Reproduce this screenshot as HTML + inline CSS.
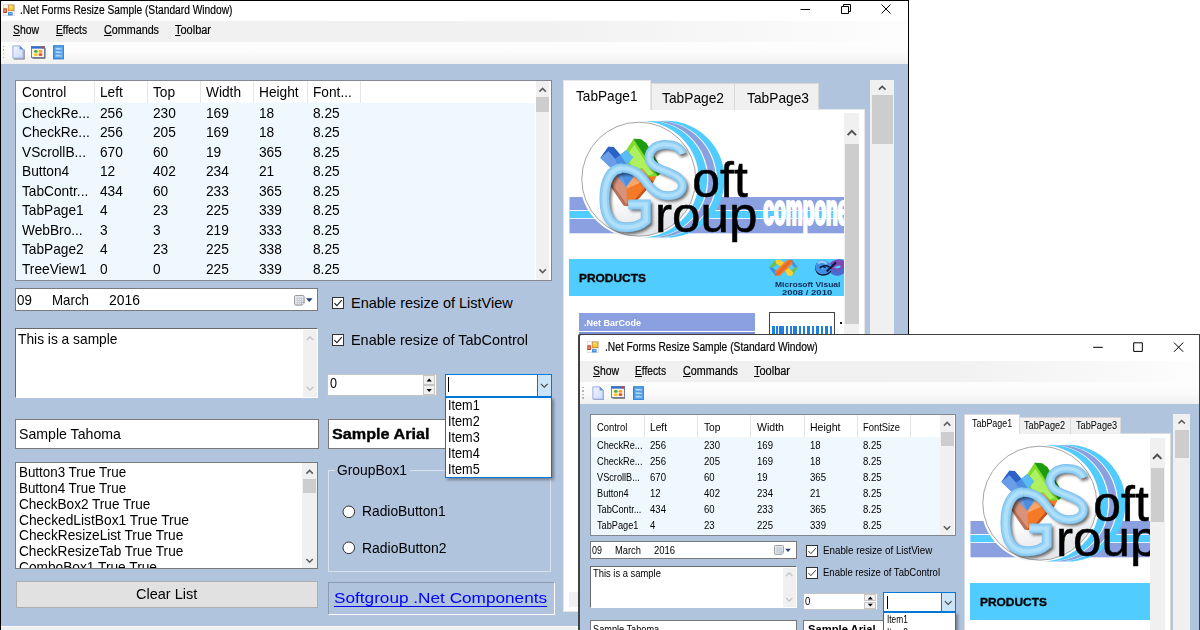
<!DOCTYPE html>
<html><head><meta charset="utf-8"><title>.Net Forms Resize Sample</title>
<style>
html,body{margin:0;padding:0}
html{width:1200px;height:630px;overflow:hidden}
body{width:1200px;height:630px;overflow:hidden;background:#fff;position:relative;font-family:"Liberation Sans",sans-serif;color:#000}
div,span,svg{position:absolute;box-sizing:border-box}
.t{white-space:nowrap;transform-origin:0 50%;display:block}
u{text-decoration:underline}

.win{background:#b0c4de;overflow:hidden}
.sunk{background:#fff;border:1px solid;border-color:#696969 #fff #fff #696969}
.flat{background:#fff;border:1px solid #7a7a7a}
.sb{background:#f0f0f0}
.th{background:#cdcdcd}

</style></head><body>
<div style="left:0;top:0;width:1200px;height:630px;overflow:hidden">
<div class="" style="left:0.00px;top:0.00px;width:909.20px;height:631.00px;background:#000"></div>
<div class="" style="left:1.00px;top:1.00px;width:907.20px;height:624.80px;background:#b0c4de"></div>
<div class="" style="left:1.00px;top:625.80px;width:907.20px;height:5.00px;background:linear-gradient(180deg,#fafafa 0,#fafafa 1.2px,#f0f0f0 1.2px)"></div>
<div class="" style="left:1.00px;top:1.00px;width:907.20px;height:19.50px;background:#fff"></div>
<div class="" style="left:1.00px;top:20.50px;width:907.20px;height:21.00px;background:linear-gradient(90deg,#f0f0f0 0%,#f1f1f1 60%,#fdfdfd 100%)"></div>
<div class="" style="left:1.00px;top:41.50px;width:907.20px;height:22.50px;background:linear-gradient(180deg,#fdfdfd 0%,#fbfbfb 50%,#f0f0f0 100%)"></div>
<svg style="left:3.0px;top:3.5px" width="12.0" height="12.0" viewBox="0 0 12 12"><rect x="0.3" y="0.3" width="11.4" height="11.4" fill="#f4f4f6" stroke="#d4d4da" stroke-width="0.6"/><rect x="1.2" y="1.4" width="2.4" height="1.6" fill="#fff"/><rect x="1.2" y="9.4" width="1" height="1.4" fill="#fff"/><rect x="2.8" y="9.4" width="1" height="1.4" fill="#fff"/><rect x="10" y="8.6" width="1" height="2.2" fill="#fff"/><rect x="4.9" y="0.6" width="6.4" height="6.5" fill="#cf8a3c"/><rect x="5.7" y="1.3" width="4.8" height="4.8" fill="#f5cb35"/><rect x="6.4" y="1.8" width="3" height="1.5" fill="#fae48a"/><rect x="0.3" y="4.3" width="3.6" height="4.6" rx="0.5" fill="#c8401f"/><rect x="1.4" y="5.4" width="1.3" height="2.2" fill="#f2c0b0"/><rect x="5" y="8.1" width="4.5" height="3.3" fill="#2b7fe0"/><rect x="5.7" y="8.8" width="3" height="1.4" fill="#8cc0f4"/></svg>
<span class="t " style="left:20.30px;top:1.74px;font-size:12.30px;line-height:17px;transform:scaleX(0.8312);-webkit-text-stroke:0.2px #000;">.Net Forms Resize Sample (Standard Window)</span>
<svg style="left:795px;top:0px" width="110" height="20" viewBox="0 0 110 20" fill="none" stroke="#000" stroke-width="1"><path d="M5.5 9.5H15"/><path d="M46.5 6.5H53.5V13.5H46.5Z M48.5 6.5V4.5H55.5V11.5H53.5" /><path d="M86.5 4.5L95.5 13.5M95.5 4.5L86.5 13.5"/></svg>
<span class="t " style="left:13.00px;top:22.24px;font-size:12.00px;line-height:17px;transform:scaleX(0.8662);-webkit-text-stroke:0.2px #000;"><u>S</u>how</span>
<span class="t " style="left:56.00px;top:22.24px;font-size:12.00px;line-height:17px;transform:scaleX(0.8502);-webkit-text-stroke:0.2px #000;"><u>E</u>ffects</span>
<span class="t " style="left:104.00px;top:22.24px;font-size:12.00px;line-height:17px;transform:scaleX(0.8964);-webkit-text-stroke:0.2px #000;"><u>C</u>ommands</span>
<span class="t " style="left:175.00px;top:22.24px;font-size:12.00px;line-height:17px;transform:scaleX(0.9147);-webkit-text-stroke:0.2px #000;"><u>T</u>oolbar</span>
<div class="" style="left:2.70px;top:45.80px;width:1.40px;height:1.40px;background:#b4b4b4"></div>
<div class="" style="left:2.70px;top:49.40px;width:1.40px;height:1.40px;background:#b4b4b4"></div>
<div class="" style="left:2.70px;top:53.00px;width:1.40px;height:1.40px;background:#b4b4b4"></div>
<div class="" style="left:2.70px;top:56.60px;width:1.40px;height:1.40px;background:#b4b4b4"></div>
<svg style="left:12.0px;top:45.0px" width="12.5" height="14.5" viewBox="0 0 13 15"><defs><linearGradient id="dg12" x1="0" y1="0" x2="1" y2="1"><stop offset="0" stop-color="#f2f6ff"/><stop offset="1" stop-color="#c9d9f8"/></linearGradient></defs><path d="M1.8 14.6H12.6V4.6" stroke="#5a5a5a" stroke-width="1.1" fill="none" opacity="0.85"/><path d="M0.9 0.9H8.2L11.6 4.3V13.6H0.9Z" fill="url(#dg12)" stroke="#8c9ee6" stroke-width="0.9"/><path d="M8.2 0.9V4.3H11.6Z" fill="#5f8fe6" stroke="#7c92e0" stroke-width="0.5"/></svg>
<svg style="left:31.0px;top:45.6px" width="14.5" height="13" viewBox="0 0 15 13.4"><path d="M1.5 12.8H14.6V2" stroke="#555" stroke-width="1" fill="none" opacity="0.8"/><rect x="0.5" y="0.5" width="13.4" height="11.4" fill="#fbf3dc" stroke="#5a6ea0" stroke-width="0.9"/><rect x="0.6" y="0.6" width="13.2" height="2.1" fill="#2f6fd0"/><rect x="11.2" y="0.4" width="1.8" height="2.2" fill="#e0402a"/><ellipse cx="5" cy="5.6" rx="2" ry="1.4" fill="#4fae3a"/><ellipse cx="9.8" cy="5.6" rx="2" ry="1.4" fill="#f0a428"/><ellipse cx="5" cy="8.9" rx="2" ry="1.4" fill="#f2c62c"/><ellipse cx="9.8" cy="8.9" rx="2" ry="1.4" fill="#e2502c"/></svg>
<svg style="left:53.0px;top:45.0px" width="11.4" height="14.6" viewBox="0 0 12 15"><rect x="0.7" y="0.7" width="10.6" height="13.6" fill="#5ea6ea" stroke="#3186da" stroke-width="1.4"/><rect x="2.3" y="2.8" width="7.4" height="2.4" rx="0.6" fill="#9fd0f8" stroke="#3c8ede" stroke-width="0.5"/><rect x="2.3" y="6.4" width="7.4" height="2.4" rx="0.6" fill="#9fd0f8" stroke="#3c8ede" stroke-width="0.5"/><rect x="2.3" y="10" width="7.4" height="2.4" rx="0.6" fill="#9fd0f8" stroke="#3c8ede" stroke-width="0.5"/><path d="M3 3.4H7M3 7H7M3 10.6H7" stroke="#e4f2fd" stroke-width="0.5"/></svg>
<div class="" style="left:15.00px;top:80.00px;width:537.00px;height:201.00px;background:#fff;border:1px solid #828790"></div>
<div class="" style="left:16.00px;top:103.00px;width:519.00px;height:177.00px;background:#f0f8ff"></div>
<div class="" style="left:93.75px;top:81.00px;width:1.00px;height:22.00px;background:#e5e5e5"></div>
<div class="" style="left:146.70px;top:81.00px;width:1.00px;height:22.00px;background:#e5e5e5"></div>
<div class="" style="left:199.60px;top:81.00px;width:1.00px;height:22.00px;background:#e5e5e5"></div>
<div class="" style="left:252.50px;top:81.00px;width:1.00px;height:22.00px;background:#e5e5e5"></div>
<div class="" style="left:307.00px;top:81.00px;width:1.00px;height:22.00px;background:#e5e5e5"></div>
<div class="" style="left:359.50px;top:81.00px;width:1.00px;height:22.00px;background:#e5e5e5"></div>
<span class="t " style="left:22.00px;top:82.28px;font-size:14.50px;line-height:20px;transform:scaleX(0.9450);">Control</span>
<span class="t " style="left:99.80px;top:82.28px;font-size:14.50px;line-height:20px;transform:scaleX(0.9450);">Left</span>
<span class="t " style="left:152.80px;top:82.28px;font-size:14.50px;line-height:20px;transform:scaleX(0.9450);">Top</span>
<span class="t " style="left:205.80px;top:82.28px;font-size:14.50px;line-height:20px;transform:scaleX(0.9450);">Width</span>
<span class="t " style="left:258.80px;top:82.28px;font-size:14.50px;line-height:20px;transform:scaleX(0.9450);">Height</span>
<span class="t " style="left:312.80px;top:82.28px;font-size:14.50px;line-height:20px;transform:scaleX(0.9450);">Font...</span>
<span class="t " style="left:22.00px;top:102.68px;font-size:14.50px;line-height:20px;transform:scaleX(0.9450);">CheckRe...</span>
<span class="t " style="left:99.80px;top:102.68px;font-size:14.50px;line-height:20px;transform:scaleX(0.9450);">256</span>
<span class="t " style="left:152.80px;top:102.68px;font-size:14.50px;line-height:20px;transform:scaleX(0.9450);">230</span>
<span class="t " style="left:205.80px;top:102.68px;font-size:14.50px;line-height:20px;transform:scaleX(0.9450);">169</span>
<span class="t " style="left:258.80px;top:102.68px;font-size:14.50px;line-height:20px;transform:scaleX(0.9450);">18</span>
<span class="t " style="left:312.80px;top:102.68px;font-size:14.50px;line-height:20px;transform:scaleX(0.9450);">8.25</span>
<span class="t " style="left:22.00px;top:122.18px;font-size:14.50px;line-height:20px;transform:scaleX(0.9450);">CheckRe...</span>
<span class="t " style="left:99.80px;top:122.18px;font-size:14.50px;line-height:20px;transform:scaleX(0.9450);">256</span>
<span class="t " style="left:152.80px;top:122.18px;font-size:14.50px;line-height:20px;transform:scaleX(0.9450);">205</span>
<span class="t " style="left:205.80px;top:122.18px;font-size:14.50px;line-height:20px;transform:scaleX(0.9450);">169</span>
<span class="t " style="left:258.80px;top:122.18px;font-size:14.50px;line-height:20px;transform:scaleX(0.9450);">18</span>
<span class="t " style="left:312.80px;top:122.18px;font-size:14.50px;line-height:20px;transform:scaleX(0.9450);">8.25</span>
<span class="t " style="left:22.00px;top:141.68px;font-size:14.50px;line-height:20px;transform:scaleX(0.9450);">VScrollB...</span>
<span class="t " style="left:99.80px;top:141.68px;font-size:14.50px;line-height:20px;transform:scaleX(0.9450);">670</span>
<span class="t " style="left:152.80px;top:141.68px;font-size:14.50px;line-height:20px;transform:scaleX(0.9450);">60</span>
<span class="t " style="left:205.80px;top:141.68px;font-size:14.50px;line-height:20px;transform:scaleX(0.9450);">19</span>
<span class="t " style="left:258.80px;top:141.68px;font-size:14.50px;line-height:20px;transform:scaleX(0.9450);">365</span>
<span class="t " style="left:312.80px;top:141.68px;font-size:14.50px;line-height:20px;transform:scaleX(0.9450);">8.25</span>
<span class="t " style="left:22.00px;top:161.18px;font-size:14.50px;line-height:20px;transform:scaleX(0.9450);">Button4</span>
<span class="t " style="left:99.80px;top:161.18px;font-size:14.50px;line-height:20px;transform:scaleX(0.9450);">12</span>
<span class="t " style="left:152.80px;top:161.18px;font-size:14.50px;line-height:20px;transform:scaleX(0.9450);">402</span>
<span class="t " style="left:205.80px;top:161.18px;font-size:14.50px;line-height:20px;transform:scaleX(0.9450);">234</span>
<span class="t " style="left:258.80px;top:161.18px;font-size:14.50px;line-height:20px;transform:scaleX(0.9450);">21</span>
<span class="t " style="left:312.80px;top:161.18px;font-size:14.50px;line-height:20px;transform:scaleX(0.9450);">8.25</span>
<span class="t " style="left:22.00px;top:180.68px;font-size:14.50px;line-height:20px;transform:scaleX(0.9450);">TabContr...</span>
<span class="t " style="left:99.80px;top:180.68px;font-size:14.50px;line-height:20px;transform:scaleX(0.9450);">434</span>
<span class="t " style="left:152.80px;top:180.68px;font-size:14.50px;line-height:20px;transform:scaleX(0.9450);">60</span>
<span class="t " style="left:205.80px;top:180.68px;font-size:14.50px;line-height:20px;transform:scaleX(0.9450);">233</span>
<span class="t " style="left:258.80px;top:180.68px;font-size:14.50px;line-height:20px;transform:scaleX(0.9450);">365</span>
<span class="t " style="left:312.80px;top:180.68px;font-size:14.50px;line-height:20px;transform:scaleX(0.9450);">8.25</span>
<span class="t " style="left:22.00px;top:200.18px;font-size:14.50px;line-height:20px;transform:scaleX(0.9450);">TabPage1</span>
<span class="t " style="left:99.80px;top:200.18px;font-size:14.50px;line-height:20px;transform:scaleX(0.9450);">4</span>
<span class="t " style="left:152.80px;top:200.18px;font-size:14.50px;line-height:20px;transform:scaleX(0.9450);">23</span>
<span class="t " style="left:205.80px;top:200.18px;font-size:14.50px;line-height:20px;transform:scaleX(0.9450);">225</span>
<span class="t " style="left:258.80px;top:200.18px;font-size:14.50px;line-height:20px;transform:scaleX(0.9450);">339</span>
<span class="t " style="left:312.80px;top:200.18px;font-size:14.50px;line-height:20px;transform:scaleX(0.9450);">8.25</span>
<span class="t " style="left:22.00px;top:219.68px;font-size:14.50px;line-height:20px;transform:scaleX(0.9450);">WebBro...</span>
<span class="t " style="left:99.80px;top:219.68px;font-size:14.50px;line-height:20px;transform:scaleX(0.9450);">3</span>
<span class="t " style="left:152.80px;top:219.68px;font-size:14.50px;line-height:20px;transform:scaleX(0.9450);">3</span>
<span class="t " style="left:205.80px;top:219.68px;font-size:14.50px;line-height:20px;transform:scaleX(0.9450);">219</span>
<span class="t " style="left:258.80px;top:219.68px;font-size:14.50px;line-height:20px;transform:scaleX(0.9450);">333</span>
<span class="t " style="left:312.80px;top:219.68px;font-size:14.50px;line-height:20px;transform:scaleX(0.9450);">8.25</span>
<span class="t " style="left:22.00px;top:239.18px;font-size:14.50px;line-height:20px;transform:scaleX(0.9450);">TabPage2</span>
<span class="t " style="left:99.80px;top:239.18px;font-size:14.50px;line-height:20px;transform:scaleX(0.9450);">4</span>
<span class="t " style="left:152.80px;top:239.18px;font-size:14.50px;line-height:20px;transform:scaleX(0.9450);">23</span>
<span class="t " style="left:205.80px;top:239.18px;font-size:14.50px;line-height:20px;transform:scaleX(0.9450);">225</span>
<span class="t " style="left:258.80px;top:239.18px;font-size:14.50px;line-height:20px;transform:scaleX(0.9450);">338</span>
<span class="t " style="left:312.80px;top:239.18px;font-size:14.50px;line-height:20px;transform:scaleX(0.9450);">8.25</span>
<span class="t " style="left:22.00px;top:258.68px;font-size:14.50px;line-height:20px;transform:scaleX(0.9450);">TreeView1</span>
<span class="t " style="left:99.80px;top:258.68px;font-size:14.50px;line-height:20px;transform:scaleX(0.9450);">0</span>
<span class="t " style="left:152.80px;top:258.68px;font-size:14.50px;line-height:20px;transform:scaleX(0.9450);">0</span>
<span class="t " style="left:205.80px;top:258.68px;font-size:14.50px;line-height:20px;transform:scaleX(0.9450);">225</span>
<span class="t " style="left:258.80px;top:258.68px;font-size:14.50px;line-height:20px;transform:scaleX(0.9450);">339</span>
<span class="t " style="left:312.80px;top:258.68px;font-size:14.50px;line-height:20px;transform:scaleX(0.9450);">8.25</span>
<div class="" style="left:536.00px;top:81.00px;width:13.20px;height:199.00px;background:#f0f0f0"></div>
<div class="" style="left:536.10px;top:97.00px;width:13.00px;height:14.60px;background:#cdcdcd"></div>
<svg style="left:0;top:0" width="1200" height="630"><path d="M539.40 91.60L542.60 88.40L545.80 91.60" fill="none" stroke="#606060" stroke-width="1.60"/></svg>
<svg style="left:0;top:0" width="1200" height="630"><path d="M539.40 269.40L542.60 272.60L545.80 269.40" fill="none" stroke="#606060" stroke-width="1.60"/></svg>
<div class="" style="left:15.00px;top:288.00px;width:303.00px;height:23.40px;background:#fff;border:1px solid #7a7a7a"></div>
<span class="t " style="left:17.10px;top:289.58px;font-size:14.50px;line-height:20px;transform:scaleX(0.9176);">09</span>
<span class="t " style="left:52.00px;top:289.58px;font-size:14.50px;line-height:20px;transform:scaleX(0.9184);">March</span>
<span class="t " style="left:109.00px;top:289.58px;font-size:14.50px;line-height:20px;transform:scaleX(0.9610);">2016</span>
<svg style="left:293.50px;top:294.50px" width="11.0" height="11.0" viewBox="0 0 11 11"><path d="M0.5 1.5Q0.5 0.5 1.5 0.5H9Q10 0.5 10 1.5V7.5L7.5 10H1.5Q0.5 10 0.5 9Z" fill="#e3e7ea" stroke="#8e9499" stroke-width="0.9"/><path d="M2 3.5H9M2 5.5H9M2 7.5H8M3.5 2V9M5.5 2V9M7.5 2V8.5" stroke="#b5c6d6" stroke-width="0.6"/><path d="M10 7.5H8.2Q7.5 7.5 7.5 8.2V10" fill="#f6f7f8" stroke="#8e9499" stroke-width="0.7"/><path d="M1.6 10.7H8L10.7 8V2" fill="none" stroke="#9b9b9b" stroke-width="0.7" opacity="0.7"/></svg>
<svg style="left:0;top:0" width="1200" height="630"><polygon points="306.00,298.30 312.60,298.30 309.30,301.90" fill="#1f3f7a"/></svg>
<svg style="left:332.00px;top:297.00px" width="12" height="12" viewBox="0 0 12 12"><rect x="0.5" y="0.5" width="11" height="11" fill="#fff" stroke="#333" stroke-width="1"/><path d="M2.4 6.1L4.9 8.6L9.8 3.2" fill="none" stroke="#222" stroke-width="1.10"/></svg>
<span class="t " style="left:351.00px;top:292.68px;font-size:14.50px;line-height:20px;">Enable resize of ListView</span>
<svg style="left:332.00px;top:334.00px" width="12" height="12" viewBox="0 0 12 12"><rect x="0.5" y="0.5" width="11" height="11" fill="#fff" stroke="#333" stroke-width="1"/><path d="M2.4 6.1L4.9 8.6L9.8 3.2" fill="none" stroke="#222" stroke-width="1.10"/></svg>
<span class="t " style="left:351.00px;top:329.58px;font-size:14.50px;line-height:20px;transform:scaleX(0.9951);">Enable resize of TabControl</span>
<div class="sunk" style="left:15.00px;top:328.00px;width:303.00px;height:70.00px;"></div>
<span class="t " style="left:18.00px;top:328.98px;font-size:14.50px;line-height:20px;transform:scaleX(0.9498);">This is a sample</span>
<div class="" style="left:303.00px;top:330.00px;width:14.00px;height:67.00px;background:#f0f0f0"></div>
<svg style="left:0;top:0" width="1200" height="630"><path d="M306.70 340.15L310.00 336.85L313.30 340.15" fill="none" stroke="#bfbfbf" stroke-width="1.30"/></svg>
<svg style="left:0;top:0" width="1200" height="630"><path d="M306.70 386.85L310.00 390.15L313.30 386.85" fill="none" stroke="#bfbfbf" stroke-width="1.30"/></svg>
<div class="" style="left:327.30px;top:373.60px;width:109.60px;height:22.80px;background:#fff;border:1px solid #c4c4c4"></div>
<span class="t " style="left:329.50px;top:373.18px;font-size:14.50px;line-height:20px;transform:scaleX(0.8680);">0</span>
<div class="" style="left:423.00px;top:375.20px;width:12.20px;height:9.80px;background:#f0f0f0;border:1px solid #c6c6c6"></div>
<div class="" style="left:423.00px;top:385.30px;width:12.20px;height:9.80px;background:#f0f0f0;border:1px solid #c6c6c6"></div>
<svg style="left:0;top:0" width="1200" height="630"><polygon points="426.60,381.60 429.20,378.60 431.80,381.60" fill="#000"/></svg>
<svg style="left:0;top:0" width="1200" height="630"><polygon points="426.60,389.00 431.80,389.00 429.20,392.00" fill="#000"/></svg>
<div class="" style="left:445.00px;top:373.60px;width:106.60px;height:23.00px;background:#fff;border:1px solid #0078d7"></div>
<div class="" style="left:537.30px;top:374.60px;width:13.30px;height:21.00px;background:#cce4f7;border-left:1px solid #0078d7"></div>
<svg style="left:0;top:0" width="1200" height="630"><path d="M540.90 383.80L544.30 387.20L547.70 383.80" fill="none" stroke="#444" stroke-width="1.10"/></svg>
<div class="" style="left:448.20px;top:377.00px;width:1.00px;height:15.00px;background:#000"></div>
<div class="" style="left:15.00px;top:419.00px;width:303.50px;height:29.50px;background:#fff;border:1px solid #7a7a7a"></div>
<span class="t " style="left:18.50px;top:423.78px;font-size:14.20px;line-height:20px;transform:scaleX(0.9965);">Sample Tahoma</span>
<div class="" style="left:328.00px;top:419.00px;width:223.60px;height:29.50px;background:#fff;border:1px solid #7a7a7a"></div>
<span class="t " style="left:331.80px;top:423.75px;font-size:14.00px;line-height:20px;font-weight:bold;transform:scaleX(1.1567);-webkit-text-stroke:0.35px #000;">Sample Arial</span>
<div class="" style="left:15.00px;top:462.00px;width:303.00px;height:107.00px;background:#fff;border:1px solid #7a7a7a;overflow:hidden"></div>
<span class="t " style="left:18.70px;top:461.88px;font-size:14.50px;line-height:20px;transform:scaleX(0.9227);">Button3 True True</span>
<span class="t " style="left:18.70px;top:477.78px;font-size:14.50px;line-height:20px;transform:scaleX(0.9227);">Button4 True True</span>
<span class="t " style="left:18.70px;top:493.68px;font-size:14.50px;line-height:20px;transform:scaleX(0.9370);">CheckBox2 True True</span>
<span class="t " style="left:18.70px;top:509.58px;font-size:14.50px;line-height:20px;transform:scaleX(0.9501);">CheckedListBox1 True True</span>
<span class="t " style="left:18.70px;top:525.48px;font-size:14.50px;line-height:20px;transform:scaleX(0.9439);">CheckResizeList True True</span>
<span class="t " style="left:18.70px;top:541.38px;font-size:14.50px;line-height:20px;transform:scaleX(0.9395);">CheckResizeTab True True</span>
<div style="left:16px;top:555px;width:280px;height:13px;overflow:hidden">
<span class="t " style="left:2.70px;top:2.28px;font-size:14.50px;line-height:20px;transform:scaleX(0.9460);">ComboBox1 True True</span>
</div>
<div class="" style="left:302.40px;top:463.00px;width:14.40px;height:105.00px;background:#f0f0f0"></div>
<div class="" style="left:302.90px;top:479.30px;width:13.40px;height:14.00px;background:#cdcdcd"></div>
<svg style="left:0;top:0" width="1200" height="630"><path d="M306.40 473.60L309.60 470.40L312.80 473.60" fill="none" stroke="#606060" stroke-width="1.60"/></svg>
<svg style="left:0;top:0" width="1200" height="630"><path d="M306.40 559.00L309.60 562.20L312.80 559.00" fill="none" stroke="#606060" stroke-width="1.60"/></svg>
<div class="" style="left:16.00px;top:580.50px;width:302.00px;height:27.50px;background:#e1e1e1;border:1px solid #adadad"></div>
<span class="t " style="left:135.70px;top:583.98px;font-size:14.50px;line-height:20px;transform:scaleX(1.0009);">Clear List</span>
<div class="" style="left:328.00px;top:469.90px;width:222.60px;height:102.10px;border:1px solid #dce2eb"></div>
<div class="" style="left:334.50px;top:466.00px;width:75.50px;height:10.00px;background:#b0c4de"></div>
<span class="t " style="left:337.30px;top:460.15px;font-size:14.00px;line-height:20px;transform:scaleX(0.9884);">GroupBox1</span>
<svg style="left:342.20px;top:504.70px" width="13.6" height="13.6"><circle cx="6.80" cy="6.80" r="5.80" fill="#fff" stroke="#333" stroke-width="1"/></svg>
<span class="t " style="left:361.60px;top:501.92px;font-size:13.80px;line-height:19px;transform:scaleX(1.0008);">RadioButton1</span>
<svg style="left:342.20px;top:541.20px" width="13.6" height="13.6"><circle cx="6.80" cy="6.80" r="5.80" fill="#fff" stroke="#333" stroke-width="1"/></svg>
<span class="t " style="left:361.60px;top:538.52px;font-size:13.80px;line-height:19px;transform:scaleX(1.0104);">RadioButton2</span>
<div class="" style="left:327.50px;top:582.30px;width:227.00px;height:32.50px;border:1px solid;border-color:#8c9cb4 #fff #fff #8c9cb4"></div>
<span class="t " style="left:333.70px;top:587.23px;font-size:15.20px;line-height:21px;color:#0000ff;transform:scaleX(1.1320);text-decoration:underline;text-underline-offset:2.5px;text-decoration-thickness:1px;">Softgroup .Net Components</span>
<div class="" style="left:447.00px;top:399.00px;width:107.00px;height:81.00px;background:rgba(0,0,0,0.35);filter:blur(1.5px)"></div>
<div class="" style="left:445.00px;top:396.60px;width:106.60px;height:81.00px;background:#fff;border:1px solid #0078d7"></div>
<span class="t " style="left:448.00px;top:394.98px;font-size:14.50px;line-height:20px;transform:scaleX(0.8741);">Item1</span>
<span class="t " style="left:448.00px;top:410.88px;font-size:14.50px;line-height:20px;transform:scaleX(0.8741);">Item2</span>
<span class="t " style="left:448.00px;top:426.78px;font-size:14.50px;line-height:20px;transform:scaleX(0.8741);">Item3</span>
<span class="t " style="left:448.00px;top:442.68px;font-size:14.50px;line-height:20px;transform:scaleX(0.8741);">Item4</span>
<span class="t " style="left:448.00px;top:458.58px;font-size:14.50px;line-height:20px;transform:scaleX(0.8741);">Item5</span>
<div class="" style="left:563.30px;top:109.30px;width:302.00px;height:503.00px;background:#fff;border:1px solid #e6e6e6"></div>
<div class="" style="left:651.00px;top:82.60px;width:83.80px;height:27.20px;background:#f0f0f0;border:1px solid #d9d9d9;border-bottom:none"></div>
<div class="" style="left:733.80px;top:82.60px;width:84.80px;height:27.20px;background:#f0f0f0;border:1px solid #d9d9d9;border-bottom:none"></div>
<div class="" style="left:563.30px;top:80.40px;width:88.20px;height:30.00px;background:#fff;border:1px solid #e6e6e6;border-bottom:none"></div>
<span class="t " style="left:576.00px;top:85.68px;font-size:14.50px;line-height:20px;transform:scaleX(0.9417);">TabPage1</span>
<span class="t " style="left:661.50px;top:87.68px;font-size:14.50px;line-height:20px;transform:scaleX(0.9494);">TabPage2</span>
<span class="t " style="left:747.00px;top:87.68px;font-size:14.50px;line-height:20px;transform:scaleX(0.9494);">TabPage3</span>
<div style="left:566.50px;top:112.50px;width:277.80px;height:496.50px;overflow:hidden;background:#fff">
<div style="left:-566.50px;top:-112.50px;width:1200px;height:630px">
<svg style="left:0;top:0;overflow:visible" width="1200" height="630"><defs><filter id="bla" x="-20%" y="-20%" width="140%" height="140%"><feGaussianBlur stdDeviation="6"/></filter><filter id="bsa" x="-20%" y="-20%" width="140%" height="140%"><feGaussianBlur stdDeviation="3"/></filter><linearGradient id="cga" x1="0" y1="0" x2="0.3" y2="1"><stop offset="0" stop-color="#fff"/><stop offset="0.7" stop-color="#fff"/><stop offset="1" stop-color="#e4e6ea"/></linearGradient></defs><rect x="569.5" y="197" width="500" height="36.3" fill="#8ba0e0"/><rect x="569.5" y="210.1" width="500" height="8.8" fill="#fff"/><rect x="569.5" y="211" width="500" height="7.1" fill="#50ccff"/><circle cx="666.2" cy="179.2" r="58.4" fill="#50ccff"/><circle cx="658.6" cy="179.2" r="58.3" fill="#fff"/><circle cx="657.5" cy="179.2" r="58.3" fill="#8ba0e0"/><circle cx="650.0" cy="179.2" r="58.3" fill="#fff"/><circle cx="648.8" cy="179.2" r="58.3" fill="#50ccff"/><circle cx="640.6" cy="179.2" r="58.2" fill="#fff"/><path d="M638.8 119.9A59.3 59.3 0 0 0 638.8 238.5Z" fill="#fff"/><circle cx="638.8" cy="179.2" r="57" fill="url(#cga)" stroke="#9a9a9a" stroke-width="0.9"/><g transform="translate(595,130) scale(0.133333)"><polygon points="105,405 160,335 240,425 240,572 215,566" fill="#d8927a"/><polygon points="105,405 215,566 240,572 240,560 120,395" fill="#b87058"/><polygon points="290,350 355,290 400,345 465,340 440,388 300,545 238,572 238,425" fill="#f47a28"/><polygon points="290,350 355,292 400,345 330,400 238,440 238,425" fill="#f9a468"/><polygon points="440,388 300,545 238,572 238,556 290,530 425,375" fill="#c85418"/><polygon points="235,150 290,65 345,70 385,100 512,310 470,345 400,350 355,290 290,350 240,260" fill="#7edc2c"/><polygon points="290,65 345,70 385,100 512,310 470,345 300,85" fill="#1c9c10"/><polygon points="255,165 295,110 440,330 400,340 355,285 300,300 262,250" fill="#b6f56a" opacity="0.85"/><polygon points="40,210 100,125 140,128 190,185 235,150 285,205 240,260 290,350 235,428 160,340 130,295" fill="#4c8fe2"/><polygon points="40,210 100,125 140,128 190,185 150,215 100,160" fill="#2c62c8"/><polygon points="40,210 100,160 150,215 235,428 160,340 130,295" fill="#6f9fe8" opacity="0.9"/><polygon points="190,185 235,150 285,205 240,260" fill="#58bcf6"/></g><g transform="translate(564,110) scale(0.22222)" fill="none" stroke-linecap="butt" stroke-linejoin="miter"><g filter="url(#bla)" stroke="#000" stroke-opacity="0.55" transform="translate(11,11)"><path d="M532,197C522,163 490,155 455,155C413,155 383,180 383,212C383,250 425,262 458,275C500,292 533,307 533,340C533,372 500,386 465,386C425,386 400,366 375,333C350,297 320,262 262,262" stroke-width="34"/><path d="M290,425L368,425L368,498C350,515 320,528 280,528C215,528 182,480 182,400C182,320 210,262 262,262" stroke-width="40"/></g><path d="M290,425L368,425L368,498C350,515 320,528 280,528C215,528 182,480 182,400C182,320 210,262 262,262" stroke="#7fc1ec" stroke-width="45"/><path d="M532,197C522,163 490,155 455,155C413,155 383,180 383,212C383,250 425,262 458,275C500,292 533,307 533,340C533,372 500,386 465,386C425,386 400,366 375,333C350,297 320,262 262,262" stroke="#7fc1ec" stroke-width="40"/><path d="M290,425L368,425L368,498C350,515 320,528 280,528C215,528 182,480 182,400C182,320 210,262 262,262" stroke="#93d0f6" stroke-width="37"/><path d="M532,197C522,163 490,155 455,155C413,155 383,180 383,212C383,250 425,262 458,275C500,292 533,307 533,340C533,372 500,386 465,386C425,386 400,366 375,333C350,297 320,262 262,262" stroke="#93d0f6" stroke-width="32"/><path d="M290,425L368,425L368,498C350,515 320,528 280,528C215,528 182,480 182,400C182,320 210,262 262,262" stroke="#b0dffa" stroke-width="19" filter="url(#bsa)"/><path d="M532,197C522,163 490,155 455,155C413,155 383,180 383,212C383,250 425,262 458,275C500,292 533,307 533,340C533,372 500,386 465,386C425,386 400,366 375,333C350,297 320,262 262,262" stroke="#b0dffa" stroke-width="16" filter="url(#bsa)"/></g><text x="692.3" y="196.8" font-size="50" textLength="55.5" lengthAdjust="spacingAndGlyphs" fill="#000" stroke="#000" stroke-width="0.5">oft</text><text x="655" y="232.3" font-size="49.5" textLength="102.5" lengthAdjust="spacingAndGlyphs" fill="#000" stroke="#000" stroke-width="0.5">roup</text><text x="762.75" y="225.4" font-size="43.8" font-weight="bold" textLength="114" lengthAdjust="spacingAndGlyphs" fill="#fff" stroke="#fff" stroke-width="1.5">components</text><text x="763.65" y="225.4" font-size="43.8" font-weight="bold" textLength="114" lengthAdjust="spacingAndGlyphs" fill="#fff" stroke="#fff" stroke-width="1.5">components</text></svg>
<div class="" style="left:569.20px;top:259.00px;width:500.00px;height:37.00px;background:#50ccff"></div>
<span class="t " style="left:578.50px;top:270.89px;font-size:11.00px;line-height:15px;font-weight:bold;transform:scaleX(1.0855);-webkit-text-stroke:0.3px #000;">PRODUCTS</span>
<svg style="left:760px;top:252px;overflow:visible" width="100" height="50"><g transform="scale(0.083333)"><polygon points="108,185 185,92 200,100 200,150 155,185" fill="#6cc04a"/><polygon points="108,185 155,185 200,232 200,275 185,285" fill="#3f8fe0"/><polygon points="385,92 455,185 412,185 372,140 372,100" fill="#4a90e0"/><polygon points="455,185 385,285 372,275 372,232 412,185" fill="#6cc04a"/><polygon points="185,95 245,92 310,150 270,190 190,135" fill="#fbd034"/><polygon points="300,220 340,190 400,245 385,285 330,285" fill="#fbcf30"/><polygon points="180,235 325,95 385,92 388,140 240,285 185,285" fill="#f4802a"/><polygon points="180,260 355,95 385,92 388,115 215,285 185,285" fill="#e4602a" opacity="0.7"/><g transform="translate(838,186) scale(1.06,1.22) translate(-835,-190)"><path d="M835,190C880,135 975,120 990,172C995,240 890,250 835,190" fill="none" stroke="#7c4cb4" stroke-width="62"/><path d="M835,200C795,140 715,128 698,178C690,240 780,250 835,200" fill="none" stroke="#0c1838" stroke-width="58" transform="translate(0,10)"/><path d="M835,192C795,140 715,128 698,178C690,236 780,248 835,192" fill="none" stroke="#3f8fe4" stroke-width="56"/><path d="M700,150C725,125 775,128 800,155" fill="none" stroke="#8fccf8" stroke-width="24"/><path d="M720,195C760,165 800,170 830,185" fill="none" stroke="#0c1838" stroke-width="16"/><path d="M800,228L905,140" fill="none" stroke="#0c1838" stroke-width="22"/><path d="M860,222C900,262 990,250 995,195" fill="none" stroke="#4a6ad0" stroke-width="50"/></g></g></svg>
<span class="t " style="left:774.60px;top:278.93px;font-size:8.00px;line-height:11px;font-weight:bold;color:#0e2a52;transform:scaleX(1.0609);">Microsoft Visual</span>
<span class="t " style="left:782.30px;top:287.33px;font-size:8.00px;line-height:11px;font-weight:bold;color:#0e2a52;transform:scaleX(1.1878);">2008 / 2010</span>
<div class="" style="left:579.00px;top:313.30px;width:175.60px;height:17.80px;background:#8ba0e0"></div>
<span class="t " style="left:584.00px;top:315.77px;font-size:9.60px;line-height:13px;font-weight:bold;color:#fff;transform:scaleX(0.9373);">.Net BarCode</span>
<div class="" style="left:579.00px;top:332.40px;width:175.60px;height:10.00px;background:#7b90d2"></div>
<div class="" style="left:769.00px;top:312.00px;width:66.00px;height:40.00px;background:#fff;border:1px solid #444"></div>
<div class="" style="left:772.00px;top:326.00px;width:3.00px;height:10.00px;background:#1e7fe0"></div>
<div class="" style="left:776.00px;top:326.00px;width:2.00px;height:10.00px;background:#1e7fe0"></div>
<div class="" style="left:779.00px;top:326.00px;width:5.00px;height:10.00px;background:#1e7fe0"></div>
<div class="" style="left:786.00px;top:326.00px;width:2.00px;height:10.00px;background:#1e7fe0"></div>
<div class="" style="left:790.00px;top:326.00px;width:2.00px;height:10.00px;background:#1e7fe0"></div>
<div class="" style="left:793.00px;top:326.00px;width:4.00px;height:10.00px;background:#1e7fe0"></div>
<div class="" style="left:799.00px;top:326.00px;width:2.00px;height:10.00px;background:#1e7fe0"></div>
<div class="" style="left:803.00px;top:326.00px;width:2.00px;height:10.00px;background:#1e7fe0"></div>
<div class="" style="left:807.00px;top:326.00px;width:3.00px;height:10.00px;background:#1e7fe0"></div>
<div class="" style="left:812.00px;top:326.00px;width:2.00px;height:10.00px;background:#1e7fe0"></div>
<div class="" style="left:816.00px;top:326.00px;width:3.00px;height:10.00px;background:#1e7fe0"></div>
<div class="" style="left:821.00px;top:326.00px;width:2.00px;height:10.00px;background:#1e7fe0"></div>
<div class="" style="left:825.00px;top:326.00px;width:3.00px;height:10.00px;background:#1e7fe0"></div>
<div class="" style="left:830.00px;top:326.00px;width:2.00px;height:10.00px;background:#1e7fe0"></div>
<div class="" style="left:839.50px;top:321.50px;width:2.00px;height:2.00px;background:#111"></div>
</div></div>
<div class="" style="left:844.30px;top:113.00px;width:14.80px;height:496.00px;background:#f0f0f0"></div>
<div class="" style="left:845.20px;top:144.00px;width:13.40px;height:179.70px;background:#cdcdcd"></div>
<svg style="left:0;top:0" width="1200" height="630"><path d="M847.60 135.10L851.80 130.90L856.00 135.10" fill="none" stroke="#505050" stroke-width="2.00"/></svg>
<div class="" style="left:569.00px;top:592.00px;width:288.00px;height:15.00px;background:#f0f0f0"></div>
<div class="" style="left:870.40px;top:80.00px;width:23.60px;height:530.00px;background:#f0f0f0"></div>
<div class="" style="left:871.50px;top:95.00px;width:21.60px;height:49.00px;background:#cdcdcd"></div>
<svg style="left:0;top:0" width="1200" height="630"><path d="M878.90 89.65L882.20 86.35L885.50 89.65" fill="none" stroke="#505050" stroke-width="1.50"/></svg>
<div class="" style="left:578.40px;top:333.50px;width:621.60px;height:296.50px;background:#404040;border-top-left-radius:2px"></div>
<div class="" style="left:579.60px;top:334.50px;width:619.60px;height:296.50px;background:#b0c4de;border-top-left-radius:1.5px"></div>
<div class="" style="left:579.60px;top:334.50px;width:619.60px;height:26.50px;background:#fff;border-top-left-radius:1.5px"></div>
<div class="" style="left:579.60px;top:361.00px;width:619.60px;height:21.00px;background:linear-gradient(90deg,#f0f0f0 0%,#f1f1f1 60%,#fdfdfd 100%)"></div>
<div class="" style="left:579.60px;top:382.00px;width:619.60px;height:22.20px;background:linear-gradient(180deg,#fdfdfd 0%,#fbfbfb 50%,#f0f0f0 100%)"></div>
<svg style="left:587.0px;top:341.0px" width="12.0" height="12.0" viewBox="0 0 12 12"><rect x="0.3" y="0.3" width="11.4" height="11.4" fill="#f4f4f6" stroke="#d4d4da" stroke-width="0.6"/><rect x="1.2" y="1.4" width="2.4" height="1.6" fill="#fff"/><rect x="1.2" y="9.4" width="1" height="1.4" fill="#fff"/><rect x="2.8" y="9.4" width="1" height="1.4" fill="#fff"/><rect x="10" y="8.6" width="1" height="2.2" fill="#fff"/><rect x="4.9" y="0.6" width="6.4" height="6.5" fill="#cf8a3c"/><rect x="5.7" y="1.3" width="4.8" height="4.8" fill="#f5cb35"/><rect x="6.4" y="1.8" width="3" height="1.5" fill="#fae48a"/><rect x="0.3" y="4.3" width="3.6" height="4.6" rx="0.5" fill="#c8401f"/><rect x="1.4" y="5.4" width="1.3" height="2.2" fill="#f2c0b0"/><rect x="5" y="8.1" width="4.5" height="3.3" fill="#2b7fe0"/><rect x="5.7" y="8.8" width="3" height="1.4" fill="#8cc0f4"/></svg>
<span class="t " style="left:604.80px;top:338.54px;font-size:12.30px;line-height:17px;transform:scaleX(0.8324);-webkit-text-stroke:0.2px #000;">.Net Forms Resize Sample (Standard Window)</span>
<svg style="left:1085px;top:334px" width="110" height="26" viewBox="0 0 110 26" fill="none" stroke="#000" stroke-width="1"><path d="M8.2 13.3H17.8"/><path d="M48.7 8.8H57.3V17.4H48.7Z"/><path d="M89 8.6L98.2 17.8M98.2 8.6L89 17.8"/></svg>
<span class="t " style="left:592.50px;top:362.64px;font-size:12.00px;line-height:17px;transform:scaleX(0.8662);-webkit-text-stroke:0.2px #000;"><u>S</u>how</span>
<span class="t " style="left:635.00px;top:362.64px;font-size:12.00px;line-height:17px;transform:scaleX(0.8502);-webkit-text-stroke:0.2px #000;"><u>E</u>ffects</span>
<span class="t " style="left:683.00px;top:362.64px;font-size:12.00px;line-height:17px;transform:scaleX(0.8964);-webkit-text-stroke:0.2px #000;"><u>C</u>ommands</span>
<span class="t " style="left:754.00px;top:362.64px;font-size:12.00px;line-height:17px;transform:scaleX(0.9147);-webkit-text-stroke:0.2px #000;"><u>T</u>oolbar</span>
<div class="" style="left:582.20px;top:386.60px;width:1.40px;height:1.40px;background:#b4b4b4"></div>
<div class="" style="left:582.20px;top:390.20px;width:1.40px;height:1.40px;background:#b4b4b4"></div>
<div class="" style="left:582.20px;top:393.80px;width:1.40px;height:1.40px;background:#b4b4b4"></div>
<div class="" style="left:582.20px;top:397.40px;width:1.40px;height:1.40px;background:#b4b4b4"></div>
<svg style="left:591.5px;top:385.8px" width="12.5" height="14.5" viewBox="0 0 13 15"><defs><linearGradient id="dg591" x1="0" y1="0" x2="1" y2="1"><stop offset="0" stop-color="#f2f6ff"/><stop offset="1" stop-color="#c9d9f8"/></linearGradient></defs><path d="M1.8 14.6H12.6V4.6" stroke="#5a5a5a" stroke-width="1.1" fill="none" opacity="0.85"/><path d="M0.9 0.9H8.2L11.6 4.3V13.6H0.9Z" fill="url(#dg591)" stroke="#8c9ee6" stroke-width="0.9"/><path d="M8.2 0.9V4.3H11.6Z" fill="#5f8fe6" stroke="#7c92e0" stroke-width="0.5"/></svg>
<svg style="left:610.5px;top:386.4px" width="14.5" height="13" viewBox="0 0 15 13.4"><path d="M1.5 12.8H14.6V2" stroke="#555" stroke-width="1" fill="none" opacity="0.8"/><rect x="0.5" y="0.5" width="13.4" height="11.4" fill="#fbf3dc" stroke="#5a6ea0" stroke-width="0.9"/><rect x="0.6" y="0.6" width="13.2" height="2.1" fill="#2f6fd0"/><rect x="11.2" y="0.4" width="1.8" height="2.2" fill="#e0402a"/><ellipse cx="5" cy="5.6" rx="2" ry="1.4" fill="#4fae3a"/><ellipse cx="9.8" cy="5.6" rx="2" ry="1.4" fill="#f0a428"/><ellipse cx="5" cy="8.9" rx="2" ry="1.4" fill="#f2c62c"/><ellipse cx="9.8" cy="8.9" rx="2" ry="1.4" fill="#e2502c"/></svg>
<svg style="left:632.5px;top:385.8px" width="11.4" height="14.6" viewBox="0 0 12 15"><rect x="0.7" y="0.7" width="10.6" height="13.6" fill="#5ea6ea" stroke="#3186da" stroke-width="1.4"/><rect x="2.3" y="2.8" width="7.4" height="2.4" rx="0.6" fill="#9fd0f8" stroke="#3c8ede" stroke-width="0.5"/><rect x="2.3" y="6.4" width="7.4" height="2.4" rx="0.6" fill="#9fd0f8" stroke="#3c8ede" stroke-width="0.5"/><rect x="2.3" y="10" width="7.4" height="2.4" rx="0.6" fill="#9fd0f8" stroke="#3c8ede" stroke-width="0.5"/><path d="M3 3.4H7M3 7H7M3 10.6H7" stroke="#e4f2fd" stroke-width="0.5"/></svg>
<div class="" style="left:590.00px;top:414.00px;width:366.30px;height:122.00px;background:#fff;border:1px solid #828790;overflow:hidden"></div>
<div class="" style="left:591.00px;top:437.30px;width:349.00px;height:97.70px;background:#f0f8ff"></div>
<div class="" style="left:643.80px;top:415.00px;width:1.00px;height:22.30px;background:#e5e5e5"></div>
<div class="" style="left:697.00px;top:415.00px;width:1.00px;height:22.30px;background:#e5e5e5"></div>
<div class="" style="left:750.20px;top:415.00px;width:1.00px;height:22.30px;background:#e5e5e5"></div>
<div class="" style="left:803.50px;top:415.00px;width:1.00px;height:22.30px;background:#e5e5e5"></div>
<div class="" style="left:856.80px;top:415.00px;width:1.00px;height:22.30px;background:#e5e5e5"></div>
<div class="" style="left:910.10px;top:415.00px;width:1.00px;height:22.30px;background:#e5e5e5"></div>
<span class="t " style="left:597.00px;top:419.69px;font-size:11.00px;line-height:15px;transform:scaleX(0.8545);">Control</span>
<span class="t " style="left:650.00px;top:419.69px;font-size:11.00px;line-height:15px;transform:scaleX(0.9265);">Left</span>
<span class="t " style="left:703.50px;top:419.69px;font-size:11.00px;line-height:15px;transform:scaleX(0.9303);">Top</span>
<span class="t " style="left:756.50px;top:419.69px;font-size:11.00px;line-height:15px;transform:scaleX(0.9602);">Width</span>
<span class="t " style="left:810.00px;top:419.69px;font-size:11.00px;line-height:15px;transform:scaleX(0.9592);">Height</span>
<span class="t " style="left:863.00px;top:419.69px;font-size:11.00px;line-height:15px;transform:scaleX(0.8523);">FontSize</span>
<span class="t " style="left:597.00px;top:437.99px;font-size:11.00px;line-height:15px;transform:scaleX(0.8350);">CheckRe...</span>
<span class="t " style="left:650.00px;top:437.99px;font-size:11.00px;line-height:15px;transform:scaleX(0.8700);">256</span>
<span class="t " style="left:703.50px;top:437.99px;font-size:11.00px;line-height:15px;transform:scaleX(0.8700);">230</span>
<span class="t " style="left:756.50px;top:437.99px;font-size:11.00px;line-height:15px;transform:scaleX(0.8700);">169</span>
<span class="t " style="left:810.00px;top:437.99px;font-size:11.00px;line-height:15px;transform:scaleX(0.8700);">18</span>
<span class="t " style="left:863.00px;top:437.99px;font-size:11.00px;line-height:15px;transform:scaleX(0.8700);">8.25</span>
<span class="t " style="left:597.00px;top:453.99px;font-size:11.00px;line-height:15px;transform:scaleX(0.8350);">CheckRe...</span>
<span class="t " style="left:650.00px;top:453.99px;font-size:11.00px;line-height:15px;transform:scaleX(0.8700);">256</span>
<span class="t " style="left:703.50px;top:453.99px;font-size:11.00px;line-height:15px;transform:scaleX(0.8700);">205</span>
<span class="t " style="left:756.50px;top:453.99px;font-size:11.00px;line-height:15px;transform:scaleX(0.8700);">169</span>
<span class="t " style="left:810.00px;top:453.99px;font-size:11.00px;line-height:15px;transform:scaleX(0.8700);">18</span>
<span class="t " style="left:863.00px;top:453.99px;font-size:11.00px;line-height:15px;transform:scaleX(0.8700);">8.25</span>
<span class="t " style="left:597.00px;top:469.99px;font-size:11.00px;line-height:15px;transform:scaleX(0.8350);">VScrollB...</span>
<span class="t " style="left:650.00px;top:469.99px;font-size:11.00px;line-height:15px;transform:scaleX(0.8700);">670</span>
<span class="t " style="left:703.50px;top:469.99px;font-size:11.00px;line-height:15px;transform:scaleX(0.8700);">60</span>
<span class="t " style="left:756.50px;top:469.99px;font-size:11.00px;line-height:15px;transform:scaleX(0.8700);">19</span>
<span class="t " style="left:810.00px;top:469.99px;font-size:11.00px;line-height:15px;transform:scaleX(0.8700);">365</span>
<span class="t " style="left:863.00px;top:469.99px;font-size:11.00px;line-height:15px;transform:scaleX(0.8700);">8.25</span>
<span class="t " style="left:597.00px;top:485.99px;font-size:11.00px;line-height:15px;transform:scaleX(0.8350);">Button4</span>
<span class="t " style="left:650.00px;top:485.99px;font-size:11.00px;line-height:15px;transform:scaleX(0.8700);">12</span>
<span class="t " style="left:703.50px;top:485.99px;font-size:11.00px;line-height:15px;transform:scaleX(0.8700);">402</span>
<span class="t " style="left:756.50px;top:485.99px;font-size:11.00px;line-height:15px;transform:scaleX(0.8700);">234</span>
<span class="t " style="left:810.00px;top:485.99px;font-size:11.00px;line-height:15px;transform:scaleX(0.8700);">21</span>
<span class="t " style="left:863.00px;top:485.99px;font-size:11.00px;line-height:15px;transform:scaleX(0.8700);">8.25</span>
<span class="t " style="left:597.00px;top:501.99px;font-size:11.00px;line-height:15px;transform:scaleX(0.8350);">TabContr...</span>
<span class="t " style="left:650.00px;top:501.99px;font-size:11.00px;line-height:15px;transform:scaleX(0.8700);">434</span>
<span class="t " style="left:703.50px;top:501.99px;font-size:11.00px;line-height:15px;transform:scaleX(0.8700);">60</span>
<span class="t " style="left:756.50px;top:501.99px;font-size:11.00px;line-height:15px;transform:scaleX(0.8700);">233</span>
<span class="t " style="left:810.00px;top:501.99px;font-size:11.00px;line-height:15px;transform:scaleX(0.8700);">365</span>
<span class="t " style="left:863.00px;top:501.99px;font-size:11.00px;line-height:15px;transform:scaleX(0.8700);">8.25</span>
<span class="t " style="left:597.00px;top:517.99px;font-size:11.00px;line-height:15px;transform:scaleX(0.8350);">TabPage1</span>
<span class="t " style="left:650.00px;top:517.99px;font-size:11.00px;line-height:15px;transform:scaleX(0.8700);">4</span>
<span class="t " style="left:703.50px;top:517.99px;font-size:11.00px;line-height:15px;transform:scaleX(0.8700);">23</span>
<span class="t " style="left:756.50px;top:517.99px;font-size:11.00px;line-height:15px;transform:scaleX(0.8700);">225</span>
<span class="t " style="left:810.00px;top:517.99px;font-size:11.00px;line-height:15px;transform:scaleX(0.8700);">339</span>
<span class="t " style="left:863.00px;top:517.99px;font-size:11.00px;line-height:15px;transform:scaleX(0.8700);">8.25</span>
<div class="" style="left:940.00px;top:415.00px;width:14.30px;height:120.00px;background:#f0f0f0"></div>
<div class="" style="left:940.50px;top:431.60px;width:13.30px;height:14.60px;background:#cdcdcd"></div>
<svg style="left:0;top:0" width="1200" height="630"><path d="M943.95 425.60L947.15 422.40L950.35 425.60" fill="none" stroke="#606060" stroke-width="1.60"/></svg>
<svg style="left:0;top:0" width="1200" height="630"><path d="M943.80 526.20L947.00 529.40L950.20 526.20" fill="none" stroke="#606060" stroke-width="1.60"/></svg>
<div class="" style="left:590.00px;top:541.40px;width:207.00px;height:17.40px;background:#fff;border:1px solid #7a7a7a"></div>
<span class="t " style="left:592.10px;top:543.09px;font-size:11.00px;line-height:15px;transform:scaleX(0.8091);">09</span>
<span class="t " style="left:615.00px;top:543.09px;font-size:11.00px;line-height:15px;transform:scaleX(0.8475);">March</span>
<span class="t " style="left:653.60px;top:543.09px;font-size:11.00px;line-height:15px;transform:scaleX(0.8622);">2016</span>
<svg style="left:773.50px;top:544.50px" width="10.4" height="10.4" viewBox="0 0 11 11"><path d="M0.5 1.5Q0.5 0.5 1.5 0.5H9Q10 0.5 10 1.5V7.5L7.5 10H1.5Q0.5 10 0.5 9Z" fill="#e3e7ea" stroke="#8e9499" stroke-width="0.9"/><path d="M2 3.5H9M2 5.5H9M2 7.5H8M3.5 2V9M5.5 2V9M7.5 2V8.5" stroke="#b5c6d6" stroke-width="0.6"/><path d="M10 7.5H8.2Q7.5 7.5 7.5 8.2V10" fill="#f6f7f8" stroke="#8e9499" stroke-width="0.7"/><path d="M1.6 10.7H8L10.7 8V2" fill="none" stroke="#9b9b9b" stroke-width="0.7" opacity="0.7"/></svg>
<svg style="left:0;top:0" width="1200" height="630"><polygon points="785.20,548.80 790.80,548.80 788.00,552.00" fill="#1f3f7a"/></svg>
<div class="sunk" style="left:590.00px;top:566.30px;width:207.00px;height:41.60px;"></div>
<span class="t " style="left:592.80px;top:565.99px;font-size:11.00px;line-height:15px;transform:scaleX(0.8544);">This is a sample</span>
<div class="" style="left:782.50px;top:567.50px;width:13.50px;height:39.40px;background:#f0f0f0"></div>
<svg style="left:0;top:0" width="1200" height="630"><path d="M786.00 576.10L789.20 572.90L792.40 576.10" fill="none" stroke="#bfbfbf" stroke-width="1.20"/></svg>
<svg style="left:0;top:0" width="1200" height="630"><path d="M786.00 597.90L789.20 601.10L792.40 597.90" fill="none" stroke="#bfbfbf" stroke-width="1.20"/></svg>
<svg style="left:806.00px;top:544.60px" width="12" height="12" viewBox="0 0 12 12"><rect x="0.5" y="0.5" width="11" height="11" fill="#fff" stroke="#333" stroke-width="1"/><path d="M2.4 6.1L4.9 8.6L9.8 3.2" fill="none" stroke="#222" stroke-width="0.90"/></svg>
<span class="t " style="left:823.20px;top:543.19px;font-size:11.00px;line-height:15px;transform:scaleX(0.8900);">Enable resize of ListView</span>
<svg style="left:806.00px;top:566.80px" width="12" height="12" viewBox="0 0 12 12"><rect x="0.5" y="0.5" width="11" height="11" fill="#fff" stroke="#333" stroke-width="1"/><path d="M2.4 6.1L4.9 8.6L9.8 3.2" fill="none" stroke="#222" stroke-width="0.90"/></svg>
<span class="t " style="left:823.20px;top:565.29px;font-size:11.00px;line-height:15px;transform:scaleX(0.8671);">Enable resize of TabControl</span>
<div class="" style="left:803.00px;top:593.00px;width:74.50px;height:17.00px;background:#fff;border:1px solid #c4c4c4"></div>
<span class="t " style="left:804.70px;top:593.59px;font-size:11.00px;line-height:15px;transform:scaleX(0.8663);">0</span>
<div class="" style="left:864.20px;top:594.30px;width:12.30px;height:7.20px;background:#f0f0f0;border:1px solid #c6c6c6"></div>
<div class="" style="left:864.20px;top:601.60px;width:12.30px;height:7.20px;background:#f0f0f0;border:1px solid #c6c6c6"></div>
<svg style="left:0;top:0" width="1200" height="630"><polygon points="867.80,599.40 870.30,596.60 872.80,599.40" fill="#000"/></svg>
<svg style="left:0;top:0" width="1200" height="630"><polygon points="867.80,603.80 872.80,603.80 870.30,606.60" fill="#000"/></svg>
<div class="" style="left:883.30px;top:592.40px;width:72.60px;height:19.80px;background:#fff;border:1px solid #0078d7"></div>
<div class="" style="left:941.30px;top:593.40px;width:13.60px;height:17.80px;background:#cce4f7;border-left:1px solid #0078d7"></div>
<svg style="left:0;top:0" width="1200" height="630"><path d="M944.80 601.10L948.20 604.50L951.60 601.10" fill="none" stroke="#444" stroke-width="1.10"/></svg>
<div class="" style="left:887.40px;top:596.00px;width:1.00px;height:12.50px;background:#000"></div>
<div class="" style="left:590.00px;top:620.30px;width:207.00px;height:20.00px;background:#fff;border:1px solid #7a7a7a"></div>
<span class="t " style="left:592.80px;top:621.89px;font-size:11.00px;line-height:15px;transform:scaleX(0.8349);">Sample Tahoma</span>
<div class="" style="left:803.30px;top:620.30px;width:153.00px;height:20.00px;background:#fff;border:1px solid #7a7a7a"></div>
<span class="t " style="left:807.50px;top:622.49px;font-size:11.00px;line-height:15px;font-weight:bold;transform:scaleX(1.0192);">Sample Arial</span>
<div class="" style="left:885.00px;top:614.00px;width:73.00px;height:30.00px;background:rgba(0,0,0,0.35);filter:blur(1.5px)"></div>
<div class="" style="left:883.30px;top:611.80px;width:72.60px;height:30.00px;background:#fff;border:1px solid #0078d7"></div>
<span class="t " style="left:886.70px;top:612.09px;font-size:11.00px;line-height:15px;transform:scaleX(0.7561);">Item1</span>
<span class="t " style="left:886.70px;top:625.09px;font-size:11.00px;line-height:15px;transform:scaleX(0.7561);">Item2</span>
<div class="" style="left:964.40px;top:433.30px;width:206.40px;height:220.00px;background:#fff;border:1px solid #d9d9d9"></div>
<div class="" style="left:1019.20px;top:416.60px;width:51.40px;height:17.20px;background:#f0f0f0;border:1px solid #d9d9d9;border-bottom:none"></div>
<div class="" style="left:1069.60px;top:416.60px;width:51.20px;height:17.20px;background:#f0f0f0;border:1px solid #d9d9d9;border-bottom:none"></div>
<div class="" style="left:964.40px;top:414.40px;width:55.40px;height:20.00px;background:#fff;border:1px solid #d9d9d9;border-bottom:none"></div>
<span class="t " style="left:971.60px;top:415.79px;font-size:11.00px;line-height:15px;transform:scaleX(0.8114);">TabPage1</span>
<span class="t " style="left:1023.80px;top:417.59px;font-size:11.00px;line-height:15px;transform:scaleX(0.8316);">TabPage2</span>
<span class="t " style="left:1076.20px;top:417.59px;font-size:11.00px;line-height:15px;transform:scaleX(0.8316);">TabPage3</span>
<div style="left:967.50px;top:436.50px;width:182.10px;height:193.50px;overflow:hidden;background:#fff">
<div style="left:-566.50px;top:-112.70px;width:1200px;height:630px">
<svg style="left:0;top:0;overflow:visible" width="1200" height="630"><defs><filter id="blb" x="-20%" y="-20%" width="140%" height="140%"><feGaussianBlur stdDeviation="6"/></filter><filter id="bsb" x="-20%" y="-20%" width="140%" height="140%"><feGaussianBlur stdDeviation="3"/></filter><linearGradient id="cgb" x1="0" y1="0" x2="0.3" y2="1"><stop offset="0" stop-color="#fff"/><stop offset="0.7" stop-color="#fff"/><stop offset="1" stop-color="#e4e6ea"/></linearGradient></defs><rect x="569.5" y="197" width="500" height="36.3" fill="#8ba0e0"/><rect x="569.5" y="210.1" width="500" height="8.8" fill="#fff"/><rect x="569.5" y="211" width="500" height="7.1" fill="#50ccff"/><circle cx="666.2" cy="179.2" r="58.4" fill="#50ccff"/><circle cx="658.6" cy="179.2" r="58.3" fill="#fff"/><circle cx="657.5" cy="179.2" r="58.3" fill="#8ba0e0"/><circle cx="650.0" cy="179.2" r="58.3" fill="#fff"/><circle cx="648.8" cy="179.2" r="58.3" fill="#50ccff"/><circle cx="640.6" cy="179.2" r="58.2" fill="#fff"/><path d="M638.8 119.9A59.3 59.3 0 0 0 638.8 238.5Z" fill="#fff"/><circle cx="638.8" cy="179.2" r="57" fill="url(#cgb)" stroke="#9a9a9a" stroke-width="0.9"/><g transform="translate(595,130) scale(0.133333)"><polygon points="105,405 160,335 240,425 240,572 215,566" fill="#d8927a"/><polygon points="105,405 215,566 240,572 240,560 120,395" fill="#b87058"/><polygon points="290,350 355,290 400,345 465,340 440,388 300,545 238,572 238,425" fill="#f47a28"/><polygon points="290,350 355,292 400,345 330,400 238,440 238,425" fill="#f9a468"/><polygon points="440,388 300,545 238,572 238,556 290,530 425,375" fill="#c85418"/><polygon points="235,150 290,65 345,70 385,100 512,310 470,345 400,350 355,290 290,350 240,260" fill="#7edc2c"/><polygon points="290,65 345,70 385,100 512,310 470,345 300,85" fill="#1c9c10"/><polygon points="255,165 295,110 440,330 400,340 355,285 300,300 262,250" fill="#b6f56a" opacity="0.85"/><polygon points="40,210 100,125 140,128 190,185 235,150 285,205 240,260 290,350 235,428 160,340 130,295" fill="#4c8fe2"/><polygon points="40,210 100,125 140,128 190,185 150,215 100,160" fill="#2c62c8"/><polygon points="40,210 100,160 150,215 235,428 160,340 130,295" fill="#6f9fe8" opacity="0.9"/><polygon points="190,185 235,150 285,205 240,260" fill="#58bcf6"/></g><g transform="translate(564,110) scale(0.22222)" fill="none" stroke-linecap="butt" stroke-linejoin="miter"><g filter="url(#blb)" stroke="#000" stroke-opacity="0.55" transform="translate(11,11)"><path d="M532,197C522,163 490,155 455,155C413,155 383,180 383,212C383,250 425,262 458,275C500,292 533,307 533,340C533,372 500,386 465,386C425,386 400,366 375,333C350,297 320,262 262,262" stroke-width="34"/><path d="M290,425L368,425L368,498C350,515 320,528 280,528C215,528 182,480 182,400C182,320 210,262 262,262" stroke-width="40"/></g><path d="M290,425L368,425L368,498C350,515 320,528 280,528C215,528 182,480 182,400C182,320 210,262 262,262" stroke="#7fc1ec" stroke-width="45"/><path d="M532,197C522,163 490,155 455,155C413,155 383,180 383,212C383,250 425,262 458,275C500,292 533,307 533,340C533,372 500,386 465,386C425,386 400,366 375,333C350,297 320,262 262,262" stroke="#7fc1ec" stroke-width="40"/><path d="M290,425L368,425L368,498C350,515 320,528 280,528C215,528 182,480 182,400C182,320 210,262 262,262" stroke="#93d0f6" stroke-width="37"/><path d="M532,197C522,163 490,155 455,155C413,155 383,180 383,212C383,250 425,262 458,275C500,292 533,307 533,340C533,372 500,386 465,386C425,386 400,366 375,333C350,297 320,262 262,262" stroke="#93d0f6" stroke-width="32"/><path d="M290,425L368,425L368,498C350,515 320,528 280,528C215,528 182,480 182,400C182,320 210,262 262,262" stroke="#b0dffa" stroke-width="19" filter="url(#bsb)"/><path d="M532,197C522,163 490,155 455,155C413,155 383,180 383,212C383,250 425,262 458,275C500,292 533,307 533,340C533,372 500,386 465,386C425,386 400,366 375,333C350,297 320,262 262,262" stroke="#b0dffa" stroke-width="16" filter="url(#bsb)"/></g><text x="692.3" y="196.8" font-size="50" textLength="55.5" lengthAdjust="spacingAndGlyphs" fill="#000" stroke="#000" stroke-width="0.5">oft</text><text x="655" y="232.3" font-size="49.5" textLength="102.5" lengthAdjust="spacingAndGlyphs" fill="#000" stroke="#000" stroke-width="0.5">roup</text><text x="762.75" y="225.4" font-size="43.8" font-weight="bold" textLength="114" lengthAdjust="spacingAndGlyphs" fill="#fff" stroke="#fff" stroke-width="1.5">components</text><text x="763.65" y="225.4" font-size="43.8" font-weight="bold" textLength="114" lengthAdjust="spacingAndGlyphs" fill="#fff" stroke="#fff" stroke-width="1.5">components</text></svg>
<div class="" style="left:569.20px;top:259.00px;width:500.00px;height:37.00px;background:#50ccff"></div>
<span class="t " style="left:578.50px;top:270.89px;font-size:11.00px;line-height:15px;font-weight:bold;transform:scaleX(1.0855);-webkit-text-stroke:0.3px #000;">PRODUCTS</span>
<svg style="left:760px;top:252px;overflow:visible" width="100" height="50"><g transform="scale(0.083333)"><polygon points="108,185 185,92 200,100 200,150 155,185" fill="#6cc04a"/><polygon points="108,185 155,185 200,232 200,275 185,285" fill="#3f8fe0"/><polygon points="385,92 455,185 412,185 372,140 372,100" fill="#4a90e0"/><polygon points="455,185 385,285 372,275 372,232 412,185" fill="#6cc04a"/><polygon points="185,95 245,92 310,150 270,190 190,135" fill="#fbd034"/><polygon points="300,220 340,190 400,245 385,285 330,285" fill="#fbcf30"/><polygon points="180,235 325,95 385,92 388,140 240,285 185,285" fill="#f4802a"/><polygon points="180,260 355,95 385,92 388,115 215,285 185,285" fill="#e4602a" opacity="0.7"/><g transform="translate(838,186) scale(1.06,1.22) translate(-835,-190)"><path d="M835,190C880,135 975,120 990,172C995,240 890,250 835,190" fill="none" stroke="#7c4cb4" stroke-width="62"/><path d="M835,200C795,140 715,128 698,178C690,240 780,250 835,200" fill="none" stroke="#0c1838" stroke-width="58" transform="translate(0,10)"/><path d="M835,192C795,140 715,128 698,178C690,236 780,248 835,192" fill="none" stroke="#3f8fe4" stroke-width="56"/><path d="M700,150C725,125 775,128 800,155" fill="none" stroke="#8fccf8" stroke-width="24"/><path d="M720,195C760,165 800,170 830,185" fill="none" stroke="#0c1838" stroke-width="16"/><path d="M800,228L905,140" fill="none" stroke="#0c1838" stroke-width="22"/><path d="M860,222C900,262 990,250 995,195" fill="none" stroke="#4a6ad0" stroke-width="50"/></g></g></svg>
<span class="t " style="left:774.60px;top:278.93px;font-size:8.00px;line-height:11px;font-weight:bold;color:#0e2a52;transform:scaleX(1.0609);">Microsoft Visual</span>
<span class="t " style="left:782.30px;top:287.33px;font-size:8.00px;line-height:11px;font-weight:bold;color:#0e2a52;transform:scaleX(1.1878);">2008 / 2010</span>
<div class="" style="left:579.00px;top:313.30px;width:175.60px;height:17.80px;background:#8ba0e0"></div>
<span class="t " style="left:584.00px;top:315.77px;font-size:9.60px;line-height:13px;font-weight:bold;color:#fff;transform:scaleX(0.9373);">.Net BarCode</span>
<div class="" style="left:579.00px;top:332.40px;width:175.60px;height:10.00px;background:#7b90d2"></div>
<div class="" style="left:769.00px;top:312.00px;width:66.00px;height:40.00px;background:#fff;border:1px solid #444"></div>
<div class="" style="left:772.00px;top:326.00px;width:3.00px;height:10.00px;background:#1e7fe0"></div>
<div class="" style="left:776.00px;top:326.00px;width:2.00px;height:10.00px;background:#1e7fe0"></div>
<div class="" style="left:779.00px;top:326.00px;width:5.00px;height:10.00px;background:#1e7fe0"></div>
<div class="" style="left:786.00px;top:326.00px;width:2.00px;height:10.00px;background:#1e7fe0"></div>
<div class="" style="left:790.00px;top:326.00px;width:2.00px;height:10.00px;background:#1e7fe0"></div>
<div class="" style="left:793.00px;top:326.00px;width:4.00px;height:10.00px;background:#1e7fe0"></div>
<div class="" style="left:799.00px;top:326.00px;width:2.00px;height:10.00px;background:#1e7fe0"></div>
<div class="" style="left:803.00px;top:326.00px;width:2.00px;height:10.00px;background:#1e7fe0"></div>
<div class="" style="left:807.00px;top:326.00px;width:3.00px;height:10.00px;background:#1e7fe0"></div>
<div class="" style="left:812.00px;top:326.00px;width:2.00px;height:10.00px;background:#1e7fe0"></div>
<div class="" style="left:816.00px;top:326.00px;width:3.00px;height:10.00px;background:#1e7fe0"></div>
<div class="" style="left:821.00px;top:326.00px;width:2.00px;height:10.00px;background:#1e7fe0"></div>
<div class="" style="left:825.00px;top:326.00px;width:3.00px;height:10.00px;background:#1e7fe0"></div>
<div class="" style="left:830.00px;top:326.00px;width:2.00px;height:10.00px;background:#1e7fe0"></div>
<div class="" style="left:839.50px;top:321.50px;width:2.00px;height:2.00px;background:#111"></div>
</div></div>
<div class="" style="left:1149.60px;top:437.50px;width:15.20px;height:200.00px;background:#f0f0f0"></div>
<div class="" style="left:1151.00px;top:467.80px;width:12.60px;height:54.00px;background:#cdcdcd"></div>
<svg style="left:0;top:0" width="1200" height="630"><path d="M1153.00 458.90L1157.20 454.70L1161.40 458.90" fill="none" stroke="#505050" stroke-width="2.00"/></svg>
<div class="" style="left:1173.40px;top:414.00px;width:16.60px;height:220.00px;background:#f0f0f0"></div>
<div class="" style="left:1174.50px;top:430.00px;width:14.50px;height:28.20px;background:#cdcdcd"></div>
<svg style="left:0;top:0" width="1200" height="630"><path d="M1178.50 423.60L1181.70 420.40L1184.90 423.60" fill="none" stroke="#505050" stroke-width="1.40"/></svg>
</div>
</body></html>
